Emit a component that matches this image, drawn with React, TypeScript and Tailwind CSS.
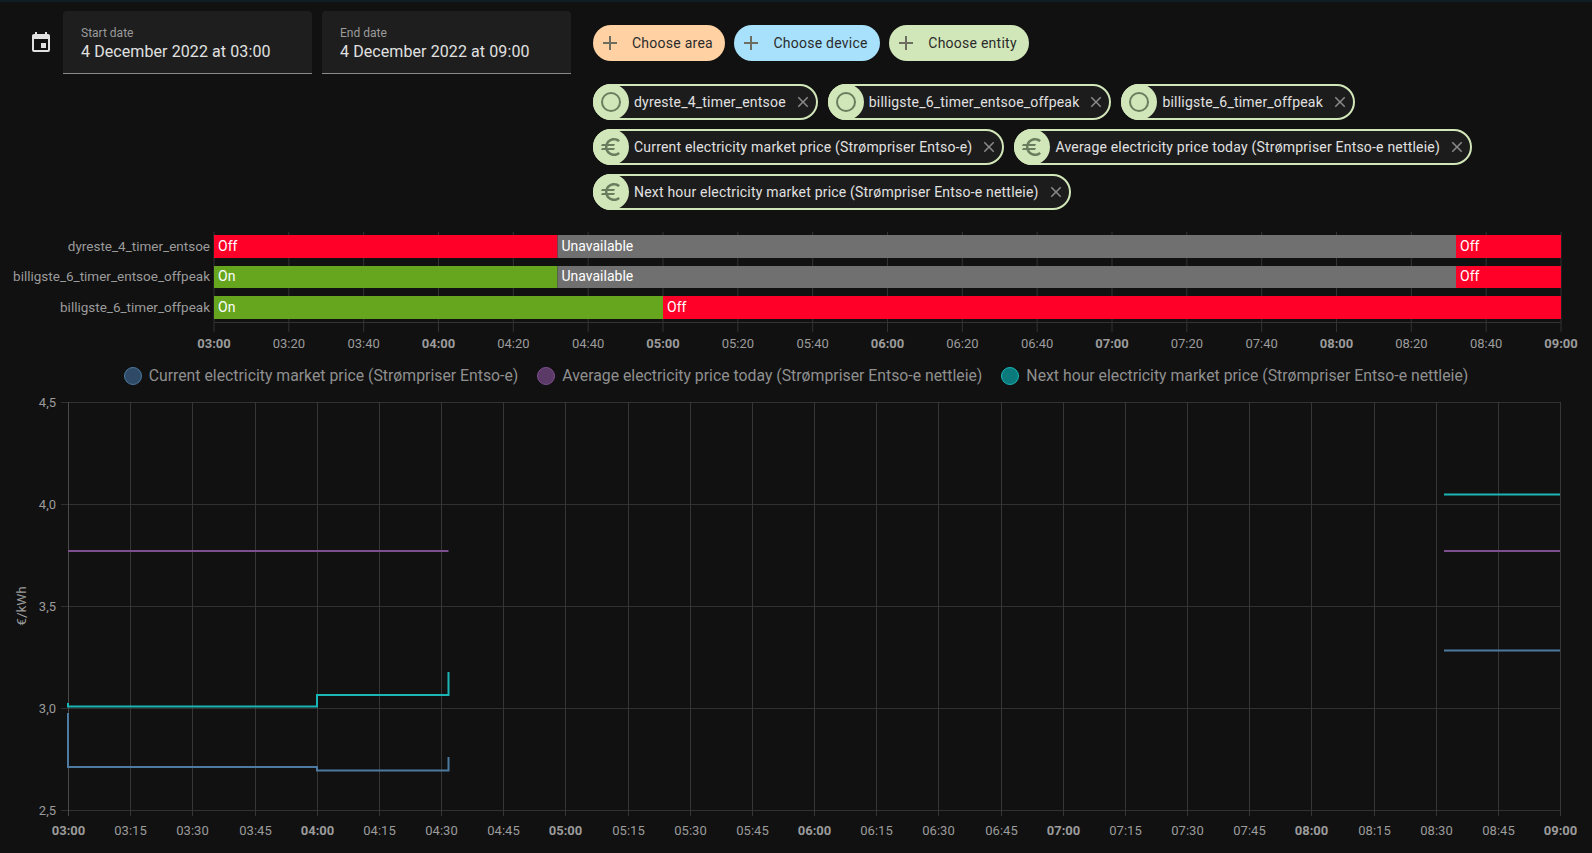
const mdi = {
  calendar: "M19,19H5V8H19M16,1V3H8V1H6V3H5C3.89,3 3,3.89 3,5V19A2,2 0 0,0 5,21H19A2,2 0 0,0 21,19V5C21,3.89 20.1,3 19,3H18V1M17,12H12V17H17V12Z",
  plus: "M19,13H13V19H11V13H5V11H11V5H13V11H19V13Z",
  close: "M19,6.41L17.59,5L12,10.59L6.41,5L5,6.41L10.59,12L5,17.59L6.41,19L12,13.41L17.59,19L19,17.59L13.41,12L19,6.41Z",
  circle: "M12,20A8,8 0 0,1 4,12A8,8 0 0,1 12,4A8,8 0 0,1 20,12A8,8 0 0,1 12,20M12,2A10,10 0 0,0 2,12A10,10 0 0,0 12,22A10,10 0 0,0 22,12A10,10 0 0,0 12,2Z",
  euro: "M15,18.5C12.5,18.5 10.32,17.08 9.24,15H15L16,13H8.58C8.53,12.67 8.5,12.34 8.5,12C8.5,11.66 8.53,11.33 8.58,11H15L16,9H9.24C10.32,6.92 12.5,5.5 15,5.5C16.61,5.5 18.09,6.09 19.23,7.07L21,5.3C19.41,3.87 17.3,3 15,3C11.08,3 7.76,5.51 6.52,9H3L2,11H6.06C6.02,11.33 6,11.66 6,12C6,12.34 6.02,12.67 6.06,13H3L2,15H6.52C7.76,18.49 11.08,21 15,21C17.31,21 19.41,20.13 21,18.7L19.22,16.93C18.09,17.91 16.62,18.5 15,18.5Z",
}

function Icon({ d, className }: { d: string; className: string }) {
  return (
    <svg viewBox="0 0 24 24" className={className} fill="currentColor">
      <path d={d} />
    </svg>
  )
}

function DateField({ label, value }: { label: string; value: string }) {
  return (
    <div className="w-[249px] h-[63px] bg-[#1e1e1e] rounded-t border-b border-[#8a8a8a] pl-[18px] pt-[15px]">
      <div className="text-[12px] leading-[14px] text-[#9b9b9b]">{label}</div>
      <div className="text-[16px] leading-[23px] tracking-[0.09px] text-[#e1e1e1]">{value}</div>
    </div>
  )
}

function ActionChip({ label, bg }: { label: string; bg: string }) {
  return (
    <div className={`h-9 rounded-full flex items-center pl-[5px] pr-[12px] gap-[10px] text-[14px] tracking-[0.25px] text-[#2b2b2b] ${bg}`}>
      <Icon d={mdi.plus} className="w-6 h-6 text-[#6e6e60]" />
      {label}
    </div>
  )
}

function EntityChip({ label, icon }: { label: string; icon: string }) {
  return (
    <div className="h-9 rounded-full border-2 border-[#d2e7b9] bg-[#1c1c1c] flex items-center pr-[4px] text-[14px] text-[#e1e1e1]">
      <div className="w-9 h-9 -ml-[2px] mr-[5px] rounded-full bg-[#d2e7b9] flex items-center justify-center shrink-0">
        <Icon d={icon} className="w-6 h-6 text-[#6a7d5e]" />
      </div>
      <span className="tracking-[0.2px]">{label}</span>
      <Icon d={mdi.close} className="w-[18px] h-[18px] ml-[8px] text-[#8a8a8a]" />
    </div>
  )
}

const LEFT = 214
const RIGHT = 1561
const rows = [
  {
    name: "dyreste_4_timer_entsoe",
    y: 7,
    h: 23,
    segs: [
      { from: 214, to: 557.5, fill: "#ff0029", text: "Off" },
      { from: 557.5, to: 1456, fill: "#707070", text: "Unavailable" },
      { from: 1456, to: 1561, fill: "#ff0029", text: "Off" },
    ],
  },
  {
    name: "billigste_6_timer_entsoe_offpeak",
    y: 38,
    h: 22,
    segs: [
      { from: 214, to: 557.5, fill: "#66a61e", text: "On" },
      { from: 557.5, to: 1456, fill: "#707070", text: "Unavailable" },
      { from: 1456, to: 1561, fill: "#ff0029", text: "Off" },
    ],
  },
  {
    name: "billigste_6_timer_offpeak",
    y: 68,
    h: 23,
    segs: [
      { from: 214, to: 663, fill: "#66a61e", text: "On" },
      { from: 663, to: 1561, fill: "#ff0029", text: "Off" },
    ],
  },
]

function timeLabel(minutes: number) {
  const h = Math.floor(minutes / 60)
  const m = minutes % 60
  return `0${h}:${m < 10 ? "0" : ""}${m}`
}

function Timeline() {
  const ticks = Array.from({ length: 19 }, (_, i) => i)
  const step = (RIGHT - LEFT) / 18
  return (
    <svg width="1592" height="130" className="block">
      {ticks.map((i) => (
        <line key={i} x1={LEFT + i * step} x2={LEFT + i * step} y1={4} y2={104} stroke="#333333" />
      ))}
      <line x1={LEFT} x2={RIGHT} y1={94.5} y2={94.5} stroke="#333333" />
      {rows.map((r) => (
        <g key={r.name}>
          <text x={210} y={r.y + r.h / 2 + 4} textAnchor="end" className="text-[13.5px] fill-[#9b9b9b]">
            {r.name}
          </text>
          {r.segs.map((s) => (
            <g key={s.from}>
              <rect x={s.from} y={r.y} width={s.to - s.from} height={r.h} fill={s.fill} />
              <text x={s.from + 4} y={r.y + r.h / 2 + 4} className="text-[14px] fill-white">
                {s.text}
              </text>
            </g>
          ))}
        </g>
      ))}
      {ticks.map((i) => {
        const min = 180 + i * 20
        return (
          <text
            key={i}
            x={LEFT + i * step}
            y={120}
            textAnchor="middle"
            className={`text-[13px] fill-[#9b9b9b] ${min % 60 === 0 ? "font-bold" : ""}`}
          >
            {timeLabel(min)}
          </text>
        )
      })}
    </svg>
  )
}

function LegendItem({ label, dot }: { label: string; dot: string }) {
  return (
    <div className="flex items-center gap-[7px]">
      <span className={`w-[18px] h-[18px] rounded-full border ${dot}`} />
      <span className="text-[15.8px] text-[#8f8f8f]">{label}</span>
    </div>
  )
}

// chart box coordinates, offset by the svg's top at y=392
const X0 = 68
const X1 = 1560
const TOP = 392
const toY = (y: number) => y - TOP

function PriceChart() {
  const step = (X1 - X0) / 24
  const ticks = Array.from({ length: 25 }, (_, i) => i)
  const values = [
    { y: 402, label: "4,5" },
    { y: 504, label: "4,0" },
    { y: 606, label: "3,5" },
    { y: 708, label: "3,0" },
    { y: 810, label: "2,5" },
  ]
  return (
    <svg width="1592" height="461" className="block">
      {values.map((v) => (
        <g key={v.y}>
          <line x1={X0 - 7} x2={X1} y1={toY(v.y) + 0.5} y2={toY(v.y) + 0.5} stroke="#313131" />
          <text x={56} y={toY(v.y) + 4.5} textAnchor="end" className="text-[13px] fill-[#9b9b9b]">
            {v.label}
          </text>
        </g>
      ))}
      {ticks.map((i) => {
        const min = 180 + i * 15
        const x = Math.round(X0 + i * step) + 0.5
        return (
          <g key={i}>
            <line x1={x} x2={x} y1={toY(402)} y2={toY(816)} stroke={i === 0 ? "#4a4a4a" : "#363636"} />
            <text
              x={x}
              y={toY(835)}
              textAnchor="middle"
              className={`text-[13px] fill-[#9b9b9b] ${min % 60 === 0 ? "font-bold" : ""}`}
            >
              {timeLabel(min)}
            </text>
          </g>
        )
      })}
      <text
        transform={`translate(26 ${toY(606)}) rotate(-90)`}
        textAnchor="middle"
        className="text-[13.5px] fill-[#9b9b9b]"
      >
        €/kWh
      </text>
      <g fill="none" strokeWidth="2">
        <path d={`M68 ${toY(713)} V${toY(767)} H317 V${toY(770.5)} H448.5 V${toY(757)}`} stroke="#4d7aa0" />
        <path d={`M68 ${toY(703)} V${toY(706.5)} H317 V${toY(695)} H448.5 V${toY(672)}`} stroke="#1ab5b5" />
        <path d={`M68 ${toY(551)} H448.5`} stroke="#7d4f8e" />
        <path d={`M1444 ${toY(494.5)} H1560`} stroke="#1ab5b5" />
        <path d={`M1444 ${toY(551)} H1560`} stroke="#7d4f8e" />
        <path d={`M1444 ${toY(650.5)} H1560`} stroke="#4d7aa0" />
      </g>
    </svg>
  )
}

export default function App() {
  return (
    <main className="h-[853px] overflow-hidden bg-[#111111] font-['Roboto',sans-serif]">
      <div className="h-[2px] bg-[#101d24]" />

      {/* Filters */}
      <section className="h-[226px] flex pl-[29px] pt-[9px]">
        <Icon d={mdi.calendar} className="w-6 h-6 mt-[20px] mr-[10px] text-[#e1e1e1]" />
        <div className="flex gap-[10px] items-start">
          <DateField label="Start date" value="4 December 2022 at 03:00" />
          <DateField label="End date" value="4 December 2022 at 09:00" />
        </div>
        <div className="ml-[22px] pt-[14px] flex flex-col">
          <div className="flex gap-[9.5px] mb-[23px]">
            <ActionChip label="Choose area" bg="bg-[#ffd1a3]" />
            <ActionChip label="Choose device" bg="bg-[#a8e1fb]" />
            <ActionChip label="Choose entity" bg="bg-[#d2e7b9]" />
          </div>
          <div className="flex flex-col gap-[9px]">
            <div className="flex gap-[10px]">
              <EntityChip icon={mdi.circle} label="dyreste_4_timer_entsoe" />
              <EntityChip icon={mdi.circle} label="billigste_6_timer_entsoe_offpeak" />
              <EntityChip icon={mdi.circle} label="billigste_6_timer_offpeak" />
            </div>
            <div className="flex gap-[10px]">
              <EntityChip icon={mdi.euro} label="Current electricity market price (Strømpriser Entso-e)" />
              <EntityChip icon={mdi.euro} label="Average electricity price today (Strømpriser Entso-e nettleie)" />
            </div>
            <div className="flex gap-[10px]">
              <EntityChip icon={mdi.euro} label="Next hour electricity market price (Strømpriser Entso-e nettleie)" />
            </div>
          </div>
        </div>
      </section>

      <Timeline />

      <div className="h-[34px] pt-[2px] flex items-center justify-center gap-[19px]">
        <LegendItem label="Current electricity market price (Strømpriser Entso-e)" dot="bg-[#2f4a66] border-[#4d7aa0]" />
        <LegendItem label="Average electricity price today (Strømpriser Entso-e nettleie)" dot="bg-[#5b3a68] border-[#7d4f8e]" />
        <LegendItem label="Next hour electricity market price (Strømpriser Entso-e nettleie)" dot="bg-[#0b7a7d] border-[#1ab5b5]" />
      </div>

      <PriceChart />
    </main>
  )
}
